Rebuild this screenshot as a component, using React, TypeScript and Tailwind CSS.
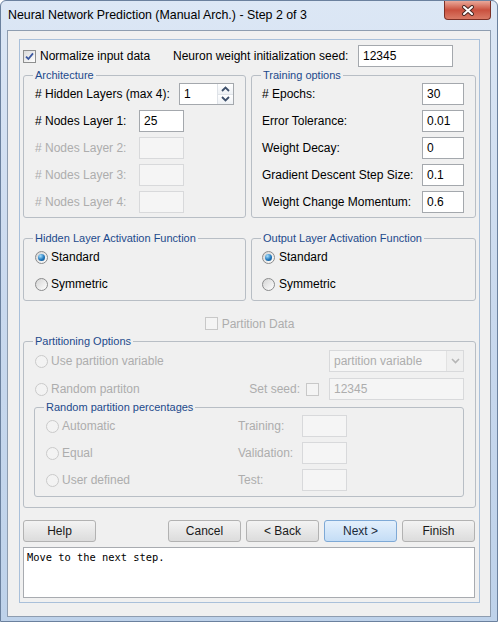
import React from 'react'

function Check({ on, off }: { on?: boolean; off?: boolean }) {
  return (
    <span
      className={`w-[13px] h-[13px] border shrink-0 flex items-center justify-center ${
        off ? 'border-[#c8c8c8] bg-[#f4f4f4]' : 'border-[#8e8f8f] bg-linear-to-br from-[#dadada] to-white'
      }`}
    >
      {on && (
        <svg width="9" height="9" viewBox="0 0 9 9">
          <path d="M1 4.6 L3.4 7 L8 1.4" fill="none" stroke="#3b58a0" strokeWidth="1.8" />
        </svg>
      )}
    </span>
  )
}

function Radio({ on, off }: { on?: boolean; off?: boolean }) {
  return (
    <span
      className={`w-[13px] h-[13px] rounded-full border shrink-0 flex items-center justify-center ${
        off ? 'border-[#cacaca] bg-[#f3f3f3]' : 'border-[#8a8b8c] bg-linear-to-br from-[#d4d4d4] to-white'
      }`}
    >
      {on && (
        <span className="w-[7px] h-[7px] rounded-full bg-[radial-gradient(circle_at_35%_30%,#a6e0ff,#1f76bb_55%,#0d4a80)]" />
      )}
    </span>
  )
}

function Field({ v, w, off }: { v?: string; w: string; off?: boolean }) {
  return (
    <div
      className={`${w} h-[22px] shrink-0 border flex items-center pl-[4px] ${
        off ? 'border-[#d8d9db] bg-[#f5f5f5] text-[#adadad]' : 'border-[#a4a8ad] bg-white text-black'
      }`}
    >
      {v}
    </div>
  )
}

function Legend({ children }: { children: React.ReactNode }) {
  return <legend className="ml-[9px] px-[2px] text-[11px] leading-[14px] text-[#1d4a8c]">{children}</legend>
}

function Btn({ label, hot }: { label: string; hot?: boolean }) {
  return (
    <button
      className={`w-[73px] h-[22px] rounded-[3px] border text-[12px] ${
        hot
          ? 'border-[#7ea9d6] bg-linear-to-b from-[#e4f0fc] to-[#c4ddf6] text-[#1a2a3a]'
          : 'border-[#b2b2b2] bg-linear-to-b from-[#f3f3f3] to-[#dcdcdc] text-[#1a1a1a]'
      }`}
    >
      {label}
    </button>
  )
}

const gray = 'text-[#adadad]'

export default function App() {
  return (
    <div className="w-[498px] h-[622px] rounded-t-[6px] border border-[#6b819e] bg-linear-to-b from-[#dce7f5] via-[#c9d9ee] to-[#bed2ea] flex flex-col font-['Liberation_Sans',Arial,sans-serif] text-[12px] text-black overflow-hidden">
      {/* title bar */}
      <div className="h-[29px] flex items-start justify-between shrink-0">
        <div className="pl-[7px] h-[28px] flex items-center text-[12.4px] text-black">
          Neural Network Prediction (Manual Arch.) - Step 2 of 3
        </div>
        <div className="mr-[6px] w-[47px] h-[19px] rounded-b-[4px] border border-t-0 border-[#7c3026] bg-linear-to-b from-[#e9a89a] via-[#c9503e] to-[#d97a66] flex items-center justify-center">
          <svg width="14" height="11" viewBox="0 0 14 11">
            <path d="M3 2 L11 9 M11 2 L3 9" stroke="#4a2a26" strokeWidth="4" strokeLinecap="round" />
            <path d="M3 2 L11 9 M11 2 L3 9" stroke="#ffffff" strokeWidth="2" strokeLinecap="round" />
          </svg>
        </div>
      </div>

      {/* client */}
      <div className="mx-[6px] h-[587px] border border-[#8e9db0] bg-[#f0f0f0] pt-[8px] pl-[11px]">
        <div className="w-[461px] border border-[#a9c0da] flex flex-col pt-[5px] pb-[4px]">
          {/* top row */}
          <div className="h-[22px] flex items-center pl-[3px]">
            <div className="w-[150px] flex items-center gap-[4px]">
              <Check on />
              <span>Normalize input data</span>
            </div>
            <span className="w-[185px]">Neuron weight initialization seed:</span>
            <Field v="12345" w="w-[95px]" />
          </div>

          {/* architecture + training */}
          <div className="mt-[1px] flex gap-[5px] px-[3px]">
            <fieldset className="w-[223px] border border-[#b8bec5] rounded-[3px]">
              <Legend>Architecture</Legend>
              <div className="flex flex-col gap-[5px] pt-[1px] pb-[4px] pl-[11px]">
                <div className="h-[22px] flex items-center">
                  <span className="w-[144px]"># Hidden Layers (max 4):</span>
                  <div className="w-[55px] h-[22px] border border-[#a4a8ad] bg-white flex">
                    <span className="flex-1 pl-[4px] flex items-center">1</span>
                    <div className="w-[16px] flex flex-col border-l border-[#dfe3e8]">
                      <div className="flex-1 flex items-center justify-center bg-linear-to-b from-white to-[#eef1f5]">
                        <svg width="9" height="6" viewBox="0 0 9 6">
                          <path d="M1 5 L4.5 1.5 L8 5" fill="none" stroke="#3e506b" strokeWidth="1.8" />
                        </svg>
                      </div>
                      <div className="flex-1 flex items-center justify-center border-t border-[#dfe3e8] bg-linear-to-b from-white to-[#eef1f5]">
                        <svg width="9" height="6" viewBox="0 0 9 6">
                          <path d="M1 1 L4.5 4.5 L8 1" fill="none" stroke="#3e506b" strokeWidth="1.8" />
                        </svg>
                      </div>
                    </div>
                  </div>
                </div>
                <div className="h-[22px] flex items-center">
                  <span className="w-[104px]"># Nodes Layer 1:</span>
                  <Field v="25" w="w-[45px]" />
                </div>
                <div className="h-[22px] flex items-center">
                  <span className={`w-[104px] ${gray}`}># Nodes Layer 2:</span>
                  <Field w="w-[45px]" off />
                </div>
                <div className="h-[22px] flex items-center">
                  <span className={`w-[104px] ${gray}`}># Nodes Layer 3:</span>
                  <Field w="w-[45px]" off />
                </div>
                <div className="h-[22px] flex items-center">
                  <span className={`w-[104px] ${gray}`}># Nodes Layer 4:</span>
                  <Field w="w-[45px]" off />
                </div>
              </div>
            </fieldset>

            <fieldset className="w-[225px] border border-[#b8bec5] rounded-[3px]">
              <Legend>Training options</Legend>
              <div className="flex flex-col gap-[5px] pt-[1px] pb-[4px] pl-[10px] pr-[11px]">
                {[
                  ['# Epochs:', '30'],
                  ['Error Tolerance:', '0.01'],
                  ['Weight Decay:', '0'],
                  ['Gradient Descent Step Size:', '0.1'],
                  ['Weight Change Momentum:', '0.6'],
                ].map(([l, v]) => (
                  <div key={l} className="h-[22px] flex items-center justify-between">
                    <span>{l}</span>
                    <Field v={v} w="w-[42px]" />
                  </div>
                ))}
              </div>
            </fieldset>
          </div>

          {/* activation functions */}
          <div className="mt-[13px] flex gap-[5px] px-[3px]">
            <fieldset className="w-[223px] border border-[#b8bec5] rounded-[3px]">
              <Legend>Hidden Layer Activation Function</Legend>
              <div className="flex flex-col gap-[5px] pt-[1px] pb-[5px] pl-[11px]">
                <div className="h-[22px] flex items-center gap-[3px]">
                  <Radio on />
                  <span>Standard</span>
                </div>
                <div className="h-[22px] flex items-center gap-[3px]">
                  <Radio />
                  <span>Symmetric</span>
                </div>
              </div>
            </fieldset>
            <fieldset className="w-[225px] border border-[#b8bec5] rounded-[3px]">
              <Legend>Output Layer Activation Function</Legend>
              <div className="flex flex-col gap-[5px] pt-[1px] pb-[5px] pl-[10px]">
                <div className="h-[22px] flex items-center gap-[4px]">
                  <Radio on />
                  <span>Standard</span>
                </div>
                <div className="h-[22px] flex items-center gap-[4px]">
                  <Radio />
                  <span>Symmetric</span>
                </div>
              </div>
            </fieldset>
          </div>

          {/* partition data */}
          <div className="mt-[12px] h-[21px] flex items-center justify-center gap-[4px]">
            <Check off />
            <span className={gray}>Partition Data</span>
          </div>

          {/* partitioning options */}
          <fieldset className="mx-[3px] border border-[#b8bec5] rounded-[3px]">
            <Legend>Partitioning Options</Legend>
            <div className="flex flex-col pt-[2px] pb-[10px] pl-[10px] pr-[11px]">
              <div className="h-[22px] flex items-center pl-[1px]">
                <Radio off />
                <span className={`ml-[3px] ${gray}`}>Use partition variable</span>
                <div className="ml-auto w-[135px] h-[22px] border border-[#d8d9db] bg-[#f5f5f5] flex">
                  <span className={`flex-1 pl-[4px] flex items-center ${gray}`}>partition variable</span>
                  <div className="w-[17px] border-l border-[#e2e2e2] flex items-center justify-center bg-[#efefef]">
                    <svg width="9" height="6" viewBox="0 0 9 6">
                      <path d="M1 1 L4.5 4.5 L8 1" fill="none" stroke="#b5b5b5" strokeWidth="1.6" />
                    </svg>
                  </div>
                </div>
              </div>
              <div className="mt-[6px] h-[22px] flex items-center pl-[1px]">
                <Radio off />
                <span className={`ml-[3px] ${gray}`}>Random partiton</span>
                <span className={`ml-auto ${gray}`}>Set seed:</span>
                <span className="ml-[6px]">
                  <Check off />
                </span>
                <span className="ml-[10px]">
                  <Field v="12345" w="w-[135px]" off />
                </span>
              </div>
              <fieldset className="w-[430px] border border-[#b8bec5] rounded-[3px]">
                <Legend>Random partition percentages</Legend>
                <div className="flex flex-col gap-[5px] pt-[1px] pb-[5px] pl-[11px]">
                  {[
                    ['Automatic', 'Training:'],
                    ['Equal', 'Validation:'],
                    ['User defined', 'Test:'],
                  ].map(([r, l]) => (
                    <div key={r} className="h-[22px] flex items-center">
                      <div className="w-[192px] flex items-center gap-[3px]">
                        <Radio off />
                        <span className={gray}>{r}</span>
                      </div>
                      <span className={`w-[64px] ${gray}`}>{l}</span>
                      <Field w="w-[45px]" off />
                    </div>
                  ))}
                </div>
              </fieldset>
            </div>
          </fieldset>

          {/* buttons */}
          <div className="mt-[12px] flex pl-[3px]">
            <Btn label="Help" />
            <div className="ml-[72px] flex gap-[5px]">
              <Btn label="Cancel" />
              <Btn label="< Back" />
              <Btn label="Next >" hot />
              <Btn label="Finish" />
            </div>
          </div>

          {/* message */}
          <div className="mt-[5px] ml-[3px] w-[452px] h-[51px] border border-[#a8abb0] bg-white px-[3px] pt-[2px] font-['DejaVu_Sans_Mono',monospace] text-[10.4px] leading-[15px]">
            Move to the next step.
          </div>
        </div>
      </div>
    </div>
  )
}
